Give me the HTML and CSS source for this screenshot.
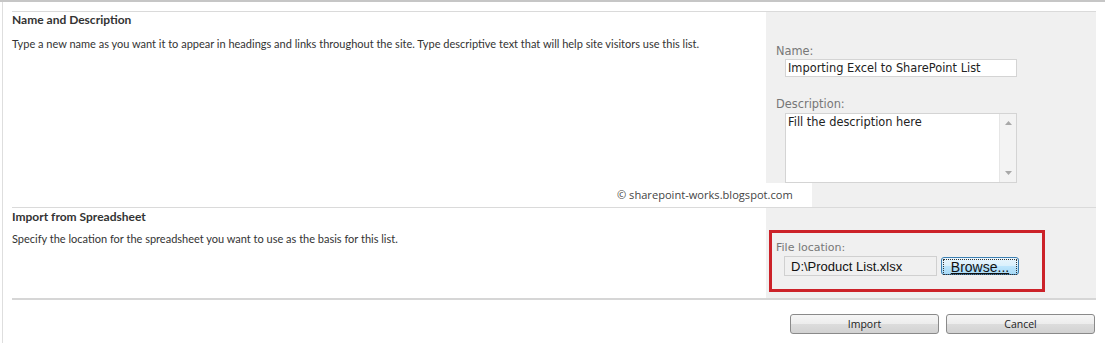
FILE: index.html
```html
<!DOCTYPE html>
<html lang="en">
<head>
    <meta charset="UTF-8">
    <meta name="viewport" content="width=device-width, initial-scale=1.0">
    <title>Import Spreadsheet</title>
    <link rel="stylesheet" href="styles.css">
</head>
<body>
    <div class="page">
        <div class="frame">
            <div class="section section-name">
                <div class="info">
                    <h3>Name and Description</h3>
                    <p>Type a new name as you want it to appear in headings and links throughout the site. Type descriptive text that will help site visitors use this list.</p>
                </div>
                <div class="panel">
                    <label class="field-label">Name:</label>
                    <input class="text-input" type="text" value="Importing Excel to SharePoint List">
                    <label class="field-label desc-label">Description:</label>
                    <div class="textarea">
                        <div class="textarea-text">Fill the description here</div>
                        <div class="scrollbar">
                            <svg width="7" height="4" viewBox="0 0 7 4"><path d="M0 4 L3.5 0 L7 4 Z" fill="#a8a8a8"/></svg>
                            <svg width="7" height="4" viewBox="0 0 7 4"><path d="M0 0 L3.5 4 L7 0 Z" fill="#a8a8a8"/></svg>
                        </div>
                    </div>
                </div>
            </div>

            <div class="section section-import">
                <div class="info">
                    <h3>Import from Spreadsheet</h3>
                    <p>Specify the location for the spreadsheet you want to use as the basis for this list.</p>
                </div>
                <div class="panel">
                    <div class="highlight">
                        <label class="field-label">File location:</label>
                        <div class="file-row">
                            <input class="file-input" type="text" value="D:\Product List.xlsx">
                            <button class="browse"><span>Browse...</span></button>
                        </div>
                    </div>
                </div>
            </div>

            <div class="actions">
                <button class="btn">Import</button>
                <button class="btn">Cancel</button>
            </div>

            <div class="watermark">&copy; sharepoint-works.blogspot.com</div>
        </div>
    </div>
</body>
</html>
```

FILE: styles.css
```css
body {
    margin: 0;
    background: #fff;
    font-family: 'Lato', sans-serif;
    color: #333;
}
.page {
    border-top: 2px solid #c6c6c6;
    height: 341px;
}
.frame {
    position: relative;
    margin-left: 2px;
    border-left: 1px solid #dedede;
    height: 341px;
    padding: 9px 9px 0 9px;
    box-sizing: border-box;
}
.section {
    display: grid;
    grid-template-columns: 1fr 330px;
    border-top: 1px solid #dadada;
    box-sizing: border-box;
}
.section-name {
    height: 196px;
}
.section-import {
    height: 93px;
    border-bottom: 2px solid #d6d6d6;
}
.info h3 {
    margin: 0;
    font-size: 12px;
    line-height: 14px;
    font-weight: bold;
    color: #333;
    padding-top: 1px;
}
.section-import .info h3 {
    padding-top: 2px;
}
.info p {
    margin: 10px 0 0 0;
    font-size: 11px;
    line-height: 14px;
    color: #333;
}
.section-import .info p {
    margin-top: 8px;
}
.panel {
    background: #f0f0f0;
    padding: 0 0 0 10px;
}
.section-name .panel {
    padding-top: 32px;
}
.field-label {
    display: block;
    font-family: 'DejaVu Sans', sans-serif;
    font-size: 11.4px;
    line-height: 14px;
    color: #777;
}
.desc-label {
    margin-top: 20px;
}
.text-input {
    display: block;
    box-sizing: border-box;
    width: 232px;
    height: 18px;
    margin: 1px 0 0 9px;
    padding: 0 2px;
    border: 1px solid #d4d4d4;
    background: #fff;
    font-family: 'DejaVu Sans', sans-serif;
    font-size: 11.4px;
    color: #222;
    outline: none;
}
.textarea {
    display: flex;
    box-sizing: border-box;
    width: 232px;
    height: 70px;
    margin: 2px 0 0 9px;
    border: 1px solid #d4d4d4;
    background: #fff;
}
.textarea-text {
    flex: 1;
    padding: 1px 2px;
    font-family: 'DejaVu Sans', sans-serif;
    font-size: 11.4px;
    line-height: 14px;
    color: #222;
}
.scrollbar {
    width: 16px;
    border-left: 1px solid #e6e6e6;
    background: #f3f3f3;
    display: flex;
    flex-direction: column;
    justify-content: space-between;
    align-items: center;
    padding: 7px 0 7px 0;
}
.section-import .panel {
    padding: 22px 0 0 3px;
}
.highlight {
    box-sizing: border-box;
    width: 276px;
    height: 62px;
    border: 3px solid #cc2229;
    padding: 8px 0 0 4px;
}
.highlight .field-label {
    font-size: 11px;
}
.file-row {
    display: flex;
    align-items: center;
    gap: 4px;
    margin: 1px 0 0 8px;
}
.file-input {
    box-sizing: border-box;
    width: 153px;
    height: 20px;
    padding: 0 6px;
    border: 1px solid #d0d0d0;
    background: #f0f0f0;
    font-family: 'Liberation Sans', sans-serif;
    font-size: 13px;
    color: #111;
    outline: none;
}
.browse {
    box-sizing: border-box;
    width: 78px;
    height: 18px;
    padding: 1px;
    border: 1px solid #3c7fb1;
    border-radius: 3px;
    background: linear-gradient(#eaf6fd, #d9f0fc 50%, #bee6fd 51%, #a7d9f5);
    font-family: 'Liberation Sans', sans-serif;
    font-size: 14px;
    color: #111;
}
.browse span {
    display: block;
    height: 14px;
    line-height: 14px;
    border: 1px dotted #333;
    text-decoration: underline;
    text-decoration-thickness: 1px;
    text-underline-offset: 1px;
}
.actions {
    display: flex;
    justify-content: flex-end;
    gap: 7px;
    margin-top: 14px;
    padding-right: 1px;
}
.btn {
    box-sizing: border-box;
    width: 149px;
    height: 20px;
    border: 1px solid #8a8a8a;
    border-radius: 3px;
    background: linear-gradient(#f6f6f6, #ececec 50%, #dcdcdc 51%, #d2d2d2);
    font-family: 'Open Sans', sans-serif;
    font-size: 10.5px;
    color: #222;
    padding: 0;
}
.watermark {
    position: absolute;
    left: 604px;
    top: 181px;
    width: 205px;
    height: 24px;
    box-sizing: border-box;
    padding: 5px 0 0 10px;
    background: #fff;
    font-family: 'Open Sans', sans-serif;
    font-size: 11.1px;
    line-height: 14px;
    color: #444;
}
```
